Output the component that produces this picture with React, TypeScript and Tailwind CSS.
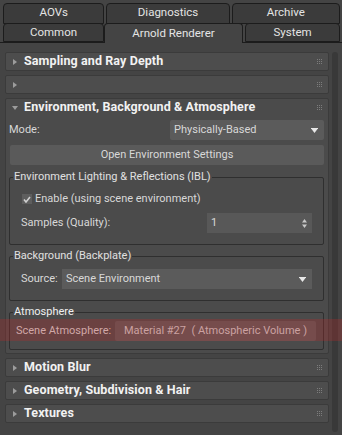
import React from "react";

function Dots() {
  return (
    <svg width="5" height="5" viewBox="0 0 5 5" className="shrink-0">
      {[0, 2, 4].map((y) =>
        [0, 2, 4].map((x) => <rect key={`${x}-${y}`} x={x} y={y} width="1" height="1" fill="#7c7c7c" />)
      )}
    </svg>
  );
}

function TriRight() {
  return (
    <svg width="4" height="6" viewBox="0 0 4 6" className="shrink-0">
      <polygon points="0,0 4,3 0,6" fill="#9c9c9c" />
    </svg>
  );
}

function TriDown() {
  return (
    <svg width="6" height="4" viewBox="0 0 6 4" className="shrink-0">
      <polygon points="0,0 6,0 3,4" fill="#9c9c9c" />
    </svg>
  );
}

function DropArrow() {
  return (
    <svg width="7" height="5" viewBox="0 0 7 5" className="shrink-0">
      <rect x="0" y="0" width="7" height="1" fill="#e8e8e8" />
      <polygon points="0.5,1 6.5,1 3.5,5" fill="#e8e8e8" />
    </svg>
  );
}

function SpinArrows() {
  return (
    <svg width="5" height="9" viewBox="0 0 5 9" className="shrink-0">
      <polygon points="2.5,0 5,3.5 0,3.5" fill="#c8c8c8" />
      <polygon points="0,5.5 5,5.5 2.5,9" fill="#c8c8c8" />
    </svg>
  );
}

function RolloutHeader({ title, open }: { title: string; open?: boolean }) {
  return (
    <div className="h-[17px] flex items-center pl-[6px] pr-[6px]">
      <div className="w-[6px] flex justify-center">{open ? <TriDown /> : <TriRight />}</div>
      <div className="ml-[6px] flex-1 text-[12.5px] font-bold text-[#f2f2f2] leading-none tracking-[0.1px] whitespace-nowrap">{title}</div>
      <Dots />
    </div>
  );
}

function Collapsed({ title }: { title: string }) {
  return (
    <div className="border border-[#3b3b3b] rounded-[2px] bg-[#4d4d4d]">
      <RolloutHeader title={title} />
    </div>
  );
}

function Tab({ label, w, top }: { label: string; w: string; top?: boolean }) {
  return (
    <div
      className={`${w} h-full flex items-center justify-center border border-[#1c1c1c] rounded-t-[4px] text-[11.5px] text-[#e4e4e4] bg-[#3b3b3b] ${
        top ? "pb-[2px]" : ""
      }`}
    >
      {label}
    </div>
  );
}

export default function App() {
  return (
    <div className="relative w-[342px] h-[435px] bg-[#444444] overflow-hidden font-['Roboto',sans-serif] text-[11px] text-[#d8d8d8]">
      {/* Tabs */}
      <div className="pt-[3px] pl-[3px] pr-[2px]">
        <div className="flex gap-[2px] h-[21px]">
          <Tab label="AOVs" w="w-[102px]" top />
          <Tab label="Diagnostics" w="w-[124px]" top />
          <Tab label="Archive" w="w-[109px]" top />
        </div>
        <div className="flex h-[20px] -mt-[1px] border-b border-[#1c1c1c] -ml-[3px] pl-[3px] -mr-[2px]">
          <Tab label="Common" w="w-[101px]" />
          <div className="w-[139px] h-[20px] flex items-center justify-center border border-[#1c1c1c] border-b-0 rounded-t-[4px] bg-[#444444] text-[11.5px] text-[#e4e4e4] -mb-px">
            Arnold Renderer
          </div>
          <div className="w-[2px]" />
          <Tab label="System" w="w-[95px]" />
        </div>
      </div>

      {/* Panel */}
      <div className="flex pt-[9px] pl-[5px]">
        <div className="w-[324px] flex flex-col gap-[4px]">
          <Collapsed title="Sampling and Ray Depth" />
          <Collapsed title="" />
          <div className="border border-[#3b3b3b] rounded-[2px] bg-[#4b4b4b]">
            <RolloutHeader title="Environment, Background & Atmosphere" open />
            <div className="pl-[3px] pr-[4px] pt-[4px] pb-[3px]">
              <div className="flex items-center h-[20px]">
                <div className="flex-1">Mode:</div>
                <div className="w-[154px] h-[20px] bg-[#5b5b5b] rounded-[2px] flex items-center pl-[4px] pr-[6px]">
                  <div className="flex-1">Physically-Based</div>
                  <DropArrow />
                </div>
              </div>
              <div className="ml-[1px] mt-[5px] h-[20px] bg-[#5a5a5a] rounded-[2px] flex items-center justify-center">
                Open Environment Settings
              </div>

              <fieldset className="mt-[5px] border border-[#2f2f2f] rounded-[2px] pb-[11px]">
                <legend className="ml-[3px] px-[1px] leading-[14px] text-[#e0e0e0] whitespace-nowrap">Environment Lighting &amp; Reflections (IBL)</legend>
                <div className="flex items-center h-[16px] mt-[7px] pl-[12px]">
                  <div className="w-[10px] h-[10px] bg-[#5e5e5e] flex items-center justify-center">
                    <svg width="8" height="7" viewBox="0 0 8 7">
                      <polyline points="1,3.5 3,6 7,1" fill="none" stroke="#d0d0d0" strokeWidth="1.6" />
                    </svg>
                  </div>
                  <div className="ml-[3px] whitespace-nowrap">Enable (using scene environment)</div>
                </div>
                <div className="flex items-center h-[20px] mt-[6px] pl-[11px] pr-[11px]">
                  <div className="flex-1 whitespace-nowrap">Samples (Quality):</div>
                  <div className="w-[105px] h-[20px] bg-[#585858] flex items-center pl-[4px] pr-[5px]">
                    <div className="flex-1">1</div>
                    <SpinArrows />
                  </div>
                </div>
              </fieldset>

              <fieldset className="mt-[4px] border border-[#2f2f2f] rounded-[2px] pb-[11px]">
                <legend className="ml-[3px] px-[1px] leading-[14px] text-[#e0e0e0] whitespace-nowrap">Background (Backplate)</legend>
                <div className="flex items-center h-[20px] mt-[6px] pl-[11px] pr-[11px]">
                  <div className="w-[41px] whitespace-nowrap">Source:</div>
                  <div className="flex-1 h-[20px] bg-[#5b5b5b] flex items-center pl-[4px] pr-[6px]">
                    <div className="flex-1">Scene Environment</div>
                    <DropArrow />
                  </div>
                </div>
              </fieldset>

              <fieldset className="mt-[4px] border border-[#2f2f2f] rounded-[2px] pb-[8px]">
                <legend className="ml-[3px] px-[1px] leading-[14px] text-[#f0f0f0] whitespace-nowrap">Atmosphere</legend>
                <div className="flex items-center h-[20px] mt-[2px] pl-[6px] pr-[7px]">
                  <div className="w-[99px] whitespace-nowrap">Scene Atmosphere:</div>
                  <div className="flex-1 h-[20px] bg-[#5b5b5b] rounded-[2px] flex items-center justify-center text-[#d0d0d0] whitespace-nowrap">
                    Material #27&nbsp;&nbsp;( Atmospheric Volume )
                  </div>
                </div>
              </fieldset>
            </div>
          </div>
          <Collapsed title="Motion Blur" />
          <Collapsed title="Geometry, Subdivision & Hair" />
          <Collapsed title="Textures" />
        </div>
        <div className="ml-[3px] w-[6px] h-[380px] bg-[#393939] rounded-[3px]" />
      </div>

      {/* highlight overlay */}
      <div className="absolute left-0 top-[319px] w-full h-[22px] bg-[rgba(190,40,40,0.28)] pointer-events-none" />
    </div>
  );
}
